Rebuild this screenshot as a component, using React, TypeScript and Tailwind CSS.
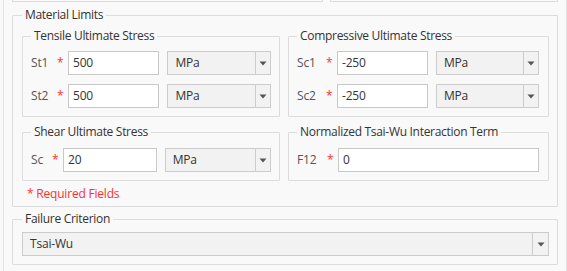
import { FC, ReactNode } from 'react';

const font = { fontFamily: '"Open Sans", "Noto Sans", sans-serif' };

type GroupProps = {
  title: string;
  className?: string;
  children: ReactNode;
};

const Group: FC<GroupProps> = ({ title, className, children }) => {
  return (
    <fieldset className={`border border-[#dcdcdc] rounded-[1px] ${className ?? ''}`}>
      <legend className="px-[3px] text-[12px] leading-[16px] tracking-[-0.3px] text-[#333]">{title}</legend>
      {children}
    </fieldset>
  );
};

const Arrow: FC = () => (
  <svg width="8" height="5" viewBox="0 0 8 5">
    <path d="M0.5 0.5 L7.5 0.5 L4 4.5 Z" fill="#555" />
  </svg>
);

const Select: FC<{ value: string; className?: string; btn?: string }> = ({ value, className, btn }) => (
  <div className={`flex h-[24px] border border-[#cccccc] bg-[#f2f2f2] ${className ?? ''}`}>
    <div className="flex-1 flex items-center pl-[7px] text-[12px] tracking-[-0.2px] text-[#333]">{value}</div>
    <div className={`flex items-center justify-center border-l border-[#cccccc] ${btn ?? 'w-[15px]'}`}>
      <Arrow />
    </div>
  </div>
);

type RowProps = {
  label: string;
  value: string;
  unit?: string;
  labelW: string;
};

const Row: FC<RowProps> = ({ label, value, unit, labelW }) => (
  <div className="flex items-center h-[24px]">
    <span className={`text-[12px] tracking-[-0.2px] text-[#555] ${labelW}`}>{label}</span>
    <span className="text-[12px] text-[#ff3030] w-[11px]">*</span>
    <div className="basis-0 grow-[84] h-[24px] border border-[#c8c8c8] bg-white flex items-center pl-[4px] text-[12px] tracking-[-0.2px] text-[#333]">
      {value}
    </div>
    {unit && <Select value={unit} className="basis-0 grow-[100] ml-[8px]" />}
  </div>
);

export default function App() {
  return (
    <div className="w-[567px] h-[271px] bg-[#f9f9f9] overflow-hidden" style={font}>
      <div className="ml-[3px] w-[564px] h-[271px] border-x border-[#e2e2e2] px-[8px]">
        <div className="flex gap-[7px]">
          <div className="w-[311px] h-[2px] border-x border-b border-[#dcdcdc]" />
          <div className="w-[228px] h-[2px] border-x border-b border-[#dcdcdc]" />
        </div>

        <Group title="Material Limits" className="mt-[5px] pl-[9px] pr-[8px] pt-[5px] pb-[4px]">
          <div className="grid grid-cols-[258px_261px] gap-x-[8px] gap-y-[7px]">
            <Group title="Tensile Ultimate Stress" className="pl-[8px] pr-[8px] pt-[7px] pb-[8px]">
              <div className="flex flex-col gap-[9px]">
                <Row label="St1" value="500" unit="MPa" labelW="w-[26px]" />
                <Row label="St2" value="500" unit="MPa" labelW="w-[26px]" />
              </div>
            </Group>
            <Group title="Compressive Ultimate Stress" className="pl-[8px] pr-[9px] pt-[7px] pb-[8px]">
              <div className="flex flex-col gap-[9px]">
                <Row label="Sc1" value="-250" unit="MPa" labelW="w-[29px]" />
                <Row label="Sc2" value="-250" unit="MPa" labelW="w-[29px]" />
              </div>
            </Group>
            <Group title="Shear Ultimate Stress" className="pl-[8px] pr-[8px] pt-[8px] pb-[8px]">
              <Row label="Sc" value="20" unit="MPa" labelW="w-[21px]" />
            </Group>
            <Group title="Normalized Tsai-Wu Interaction Term" className="pl-[8px] pr-[9px] pt-[8px] pb-[8px]">
              <Row label="F12" value="0" labelW="w-[30px]" />
            </Group>
          </div>
          <div className="mt-[5px] pl-[5px] text-[12px] leading-[16px] tracking-[-0.2px] text-[#ff3030]">* Required Fields</div>
        </Group>

        <Group title="Failure Criterion" className="mt-[4px] pl-[9px] pr-[8px] pt-[5px] pb-[8px]">
          <Select value="Tsai-Wu" btn="w-[16px]" />
        </Group>
      </div>
    </div>
  );
}
